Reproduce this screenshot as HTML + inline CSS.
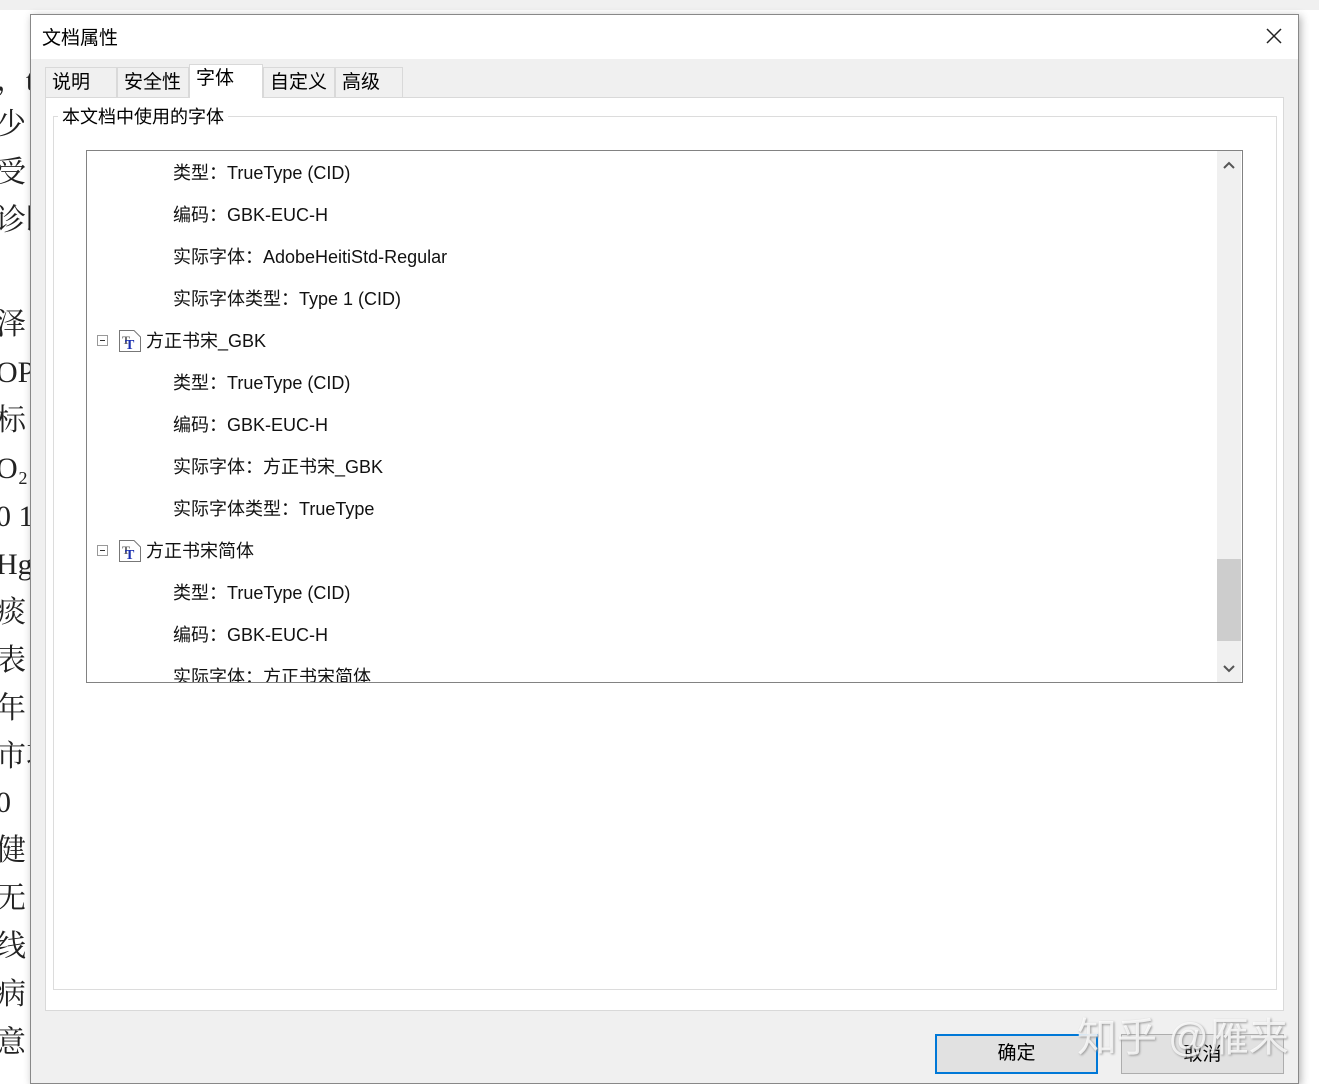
<!DOCTYPE html>
<html><head><meta charset="utf-8"><style>
body{margin:0;width:1319px;height:1084px;background:#fff;position:relative;overflow:hidden;font-family:"Liberation Sans","Noto Sans CJK SC",sans-serif;}
.bg{position:absolute;left:-4px;font-family:"Liberation Serif","Noto Serif CJK SC",serif;font-size:30px;color:#222;line-height:30px;white-space:nowrap}
.dlg{position:absolute;left:30px;top:14px;width:1267px;height:1068px;background:#f0f0f0;border:1px solid #888;box-shadow:2px 2px 8px rgba(0,0,0,.3)}
.title{position:absolute;left:0;top:0;right:0;height:44px;background:#fff;}
.t{position:absolute;font-size:19px;color:#000;white-space:nowrap}
.tab{position:absolute;top:51px;height:31px;background:#f0f0f0;border:1px solid #d9d9d9;border-bottom:none;font-size:19px;line-height:29px;padding-left:6px;box-sizing:border-box}
.panel{position:absolute;left:14px;top:82px;width:1237px;height:912px;background:#fff;border:1px solid #d9d9d9}
.grp{position:absolute;left:7px;top:18px;width:1222px;height:872px;border:1px solid #dcdcdc}
.list{position:absolute;left:55px;top:135px;width:1155px;height:531px;border:1px solid #828282;background:#fff;overflow:hidden}
.row{position:absolute;font-size:18px;color:#111;white-space:nowrap}
.sb{position:absolute;right:1px;top:0;width:24px;height:531px;background:#f0f0f0}
.btn{position:absolute;top:1019px;height:40px;background:#e1e1e1;border:1px solid #adadad;font-size:19px;text-align:center;line-height:40px;box-sizing:border-box}
</style></head><body>
<div class="bg" style="top:0;left:0;width:1319px;height:10px;background:#f0f0f0"></div>
<div class="bg" style="top:66px">，t</div>
<div class="bg" style="top:110px">少</div>
<div class="bg" style="top:158px">受</div>
<div class="bg" style="top:206px">诊断</div>
<div class="bg" style="top:310px">泽 2</div>
<div class="bg" style="top:358px">OP</div>
<div class="bg" style="top:406px">标</div>
<div class="bg" style="top:454px">O₂ :</div>
<div class="bg" style="top:502px">0 1</div>
<div class="bg" style="top:550px">Hg</div>
<div class="bg" style="top:598px">痰</div>
<div class="bg" style="top:646px">表</div>
<div class="bg" style="top:694px">年</div>
<div class="bg" style="top:742px">市功</div>
<div class="bg" style="top:788px">0</div>
<div class="bg" style="top:836px">健</div>
<div class="bg" style="top:884px">无</div>
<div class="bg" style="top:932px">线</div>
<div class="bg" style="top:980px">病</div>
<div class="bg" style="top:1028px">意</div>
<div class="dlg">
 <div class="title"><div class="t" style="left:11px;top:8px">文档属性</div>
 <svg style="position:absolute;right:16px;top:13px" width="16" height="16"><path d="M1 1L15 15M15 1L1 15" stroke="#222" stroke-width="1.5"/></svg></div>
 <div class="tab" style="left:14px;width:72px;top:52px">说明</div>
 <div class="tab" style="left:86px;width:72px;top:52px">安全性</div>
 <div class="tab" style="left:158px;width:74px;top:49px;height:34px;background:#fff;z-index:2;line-height:28px">字体</div>
 <div class="tab" style="left:232px;width:72px;top:52px">自定义</div>
 <div class="tab" style="left:304px;width:68px;top:52px">高级</div>
 <div class="panel">
  <div class="grp"></div>
  <div class="t" style="left:12px;top:5px;background:#fff;padding:0 4px;font-size:18px">本文档中使用的字体</div>
 </div>
 <div class="list" style="z-index:3">
  <div class="row" style="left:86px;top:8px">类型：TrueType (CID)</div>
  <div class="row" style="left:86px;top:50px">编码：GBK-EUC-H</div>
  <div class="row" style="left:86px;top:92px">实际字体：AdobeHeitiStd-Regular</div>
  <div class="row" style="left:86px;top:134px">实际字体类型：Type 1 (CID)</div>
  <svg style="position:absolute;left:10px;top:184px" width="12" height="12"><rect x=".5" y=".5" width="10" height="10" fill="#fff" stroke="#999"/><path d="M3 5.5H8" stroke="#333"/></svg>
  <svg style="position:absolute;left:31px;top:178px" width="24" height="24"><path d="M1.5 1.5H16L22.5 8V22.5H1.5Z" fill="#fff" stroke="#777"/><text x="4" y="15" font-family="Liberation Serif" font-weight="bold" font-size="12" fill="#666">T</text><text x="7" y="20" font-family="Liberation Serif" font-weight="bold" font-size="14" fill="#1a2fb0">T</text></svg>
  <div class="row" style="left:59px;top:176px">方正书宋_GBK</div>
  <div class="row" style="left:86px;top:218px">类型：TrueType (CID)</div>
  <div class="row" style="left:86px;top:260px">编码：GBK-EUC-H</div>
  <div class="row" style="left:86px;top:302px">实际字体：方正书宋_GBK</div>
  <div class="row" style="left:86px;top:344px">实际字体类型：TrueType</div>
  <svg style="position:absolute;left:10px;top:394px" width="12" height="12"><rect x=".5" y=".5" width="10" height="10" fill="#fff" stroke="#999"/><path d="M3 5.5H8" stroke="#333"/></svg>
  <svg style="position:absolute;left:31px;top:388px" width="24" height="24"><path d="M1.5 1.5H16L22.5 8V22.5H1.5Z" fill="#fff" stroke="#777"/><text x="4" y="15" font-family="Liberation Serif" font-weight="bold" font-size="12" fill="#666">T</text><text x="7" y="20" font-family="Liberation Serif" font-weight="bold" font-size="14" fill="#1a2fb0">T</text></svg>
  <div class="row" style="left:59px;top:386px">方正书宋简体</div>
  <div class="row" style="left:86px;top:428px">类型：TrueType (CID)</div>
  <div class="row" style="left:86px;top:470px">编码：GBK-EUC-H</div>
  <div class="row" style="left:86px;top:512px">实际字体：方正书宋简体</div>
  <div class="sb">
   <svg style="position:absolute;left:6px;top:10px" width="12" height="8"><path d="M1 7L6 2L11 7" stroke="#555" stroke-width="2" fill="none"/></svg>
   <div style="position:absolute;left:0;top:408px;width:24px;height:82px;background:#cdcdcd"></div>
   <svg style="position:absolute;left:6px;top:514px" width="12" height="8"><path d="M1 1L6 6L11 1" stroke="#555" stroke-width="2" fill="none"/></svg>
  </div>
 </div>
 <div class="btn" style="left:904px;width:163px;border:2px solid #0078d7;line-height:36px">确定</div>
 <div class="btn" style="left:1090px;width:163px">取消</div>
 <div class="t" style="left:1046px;top:990px;font-size:40px;color:rgba(255,255,255,.8);text-shadow:1px 1px 2px #999">知乎 @雁来</div>
</div>
</body></html>
